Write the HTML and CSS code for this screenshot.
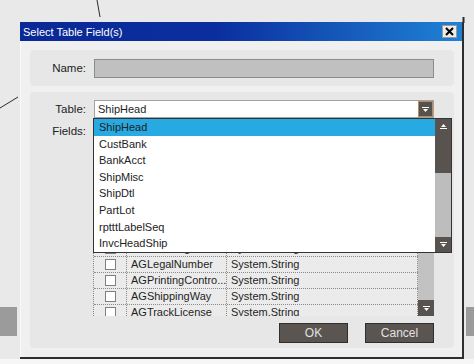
FILE: index.html
```html
<!DOCTYPE html>
<html lang="en">
<head>
  <meta charset="UTF-8">
  <title>Select Table Field(s)</title>
  <link rel="stylesheet" href="styles.css">
</head>
<body>
  <div class="desk">
    <!-- bits of the designer canvas behind the dialog -->
    <svg class="wires" width="474" height="364" viewBox="0 0 474 364">
      <path d="M97 0 L100 17" />
      <path d="M0 108 L18 97" />
      <path d="M463.5 17 L463.5 23" class="edge" />
    </svg>
    <div class="side-tab left"></div>
    <div class="side-tab right"></div>
    <div class="floor"></div>

    <div class="dialog">
      <div class="titlebar">
        <span>Select Table Field(s)</span>
        <button class="close">
          <svg width="9" height="9" viewBox="0 0 9 9"><path d="M1 1 L8 8 M8 1 L1 8" /></svg>
        </button>
      </div>

      <div class="dialog-body">
        <div class="panel name-panel">
          <label>Name:</label>
          <div class="name-input"></div>
        </div>

        <div class="panel main-panel">
          <div class="table-row">
            <label>Table:</label>
            <div class="combo">
              ShipHead
              <span class="combo-btn">
                <svg width="7" height="5" viewBox="0 0 7 5"><path d="M0 0 H7 V1 H0 Z M1 2 H6 L3.5 5 Z" /></svg>
              </span>

              <!-- open dropdown -->
              <div class="dropdown">
                <ul class="items">
                  <li class="selected">ShipHead</li>
                  <li>CustBank</li>
                  <li>BankAcct</li>
                  <li>ShipMisc</li>
                  <li>ShipDtl</li>
                  <li>PartLot</li>
                  <li>rptttLabelSeq</li>
                  <li>InvcHeadShip</li>
                </ul>
                <div class="list-scroll">
                  <div class="thumb">
                    <svg width="7" height="5" viewBox="0 0 7 5"><path d="M3.5 0 L6 3 H1 Z M0 4 H7 V5 H0 Z" /></svg>
                  </div>
                  <div class="track"></div>
                  <div class="scroll-btn">
                    <svg width="7" height="5" viewBox="0 0 7 5"><path d="M0 0 H7 V1 H0 Z M1 2 H6 L3.5 5 Z" /></svg>
                  </div>
                </div>
              </div>
            </div>
          </div>

          <div class="fields-row">
            <label>Fields:</label>
            <div class="grid">
              <div class="grid-body">
                <div class="grid-head"></div>
                <!-- rows under the open list -->
                <div class="grid-row"><span class="chk"><i></i></span><span></span><span></span></div>
                <div class="grid-row"><span class="chk"><i></i></span><span></span><span></span></div>
                <div class="grid-row"><span class="chk"><i></i></span><span></span><span></span></div>
                <div class="grid-row"><span class="chk"><i></i></span><span></span><span></span></div>
                <div class="grid-row"><span class="chk"><i></i></span><span></span><span></span></div>
                <div class="grid-row"><span class="chk"><i></i></span><span></span><span></span></div>
                <div class="grid-row"><span class="chk"><i></i></span><span>AGInvoicing</span><span>System.String</span></div>
                <div class="grid-row"><span class="chk"><i></i></span><span>AGLegalNumber</span><span>System.String</span></div>
                <div class="grid-row"><span class="chk"><i></i></span><span>AGPrintingContro...</span><span>System.String</span></div>
                <div class="grid-row"><span class="chk"><i></i></span><span>AGShippingWay</span><span>System.String</span></div>
                <div class="grid-row"><span class="chk"><i></i></span><span>AGTrackLicense</span><span>System.String</span></div>
              </div>
              <div class="grid-scroll">
                <div class="scroll-btn">
                  <svg width="7" height="5" viewBox="0 0 7 5"><path d="M0 0 H7 V1 H0 Z M1 2 H6 L3.5 5 Z" /></svg>
                </div>
              </div>
            </div>
          </div>

          <div class="actions">
            <button class="btn">OK</button>
            <button class="btn">Cancel</button>
          </div>
        </div>
      </div>
    </div>
  </div>
</body>
</html>
```

FILE: styles.css
```css
* {
  box-sizing: border-box;
}

body {
  margin: 0;
  font-family: "Liberation Sans", Arial, sans-serif;
  font-size: 11px;
  color: #1e1e1e;
}

.desk {
  position: relative;
  width: 474px;
  height: 364px;
  overflow: hidden;
  background: #e9e9e9;
  padding: 22px 0 0 20px;
}

.wires {
  position: absolute;
  left: 0;
  top: 0;
}

.wires path {
  stroke: #2b2b2b;
  stroke-width: 1;
  fill: none;
}

.wires .edge {
  stroke-width: 2;
}

.side-tab {
  position: absolute;
  top: 307px;
  height: 29px;
  background: #9b9b9b;
}

.side-tab.left {
  left: 0;
  width: 17px;
}

.side-tab.right {
  right: 0;
  width: 8px;
}

.floor {
  position: absolute;
  left: 0;
  right: 0;
  bottom: 0;
  height: 5px;
  background: #f6f6f6;
}

/* dialog */

.dialog {
  position: relative;
  width: 444px;
  border-right: 2px solid #2e2e2e;
  border-bottom: 2px solid #2e2e2e;
  background: #f0f0f0;
}

.titlebar {
  display: flex;
  justify-content: space-between;
  align-items: center;
  height: 19px;
  padding: 0 5px 0 3px;
  background: linear-gradient(90deg, #0a2896 0%, #0b2f9f 45%, #1f82d5 100%);
  color: #fff;
  font-size: 11px;
}

.close {
  width: 15px;
  height: 13px;
  padding: 0;
  display: flex;
  align-items: center;
  justify-content: center;
  background: #ececec;
  border: 1px solid #9c9c9c;
}

.close path {
  stroke: #000;
  stroke-width: 2;
}

.dialog-body {
  height: 316px;
  padding: 9px 8px 9px 10px;
  border-left: 1px solid #fafafa;
}

.panel {
  background: #e7e7e7;
  border-radius: 4px;
}

label {
  width: 56px;
  margin-right: 8px;
  text-align: right;
  font-size: 11.5px;
  color: #222;
}

.name-panel {
  display: flex;
  align-items: center;
  height: 36px;
  padding-right: 20px;
  margin-left: -1px;
}

.name-input {
  flex: 1;
  height: 19px;
  background: #c0c0c0;
  border: 1px solid #8c8c8c;
}

.main-panel {
  height: 256px;
  margin-top: 6px;
  margin-left: -1px;
  padding: 8px 20px 5px 0;
}

.table-row {
  display: flex;
  align-items: center;
  height: 18px;
}

.combo {
  position: relative;
  flex: 1;
  height: 18px;
  background: #fff;
  border: 1px solid #a2a2a2;
  padding-left: 3px;
  line-height: 16px;
  font-size: 11px;
}

.combo-btn {
  position: absolute;
  right: 0;
  top: 0;
  width: 15px;
  height: 16px;
  display: flex;
  align-items: center;
  justify-content: center;
  background: #58524c;
  border: 1px solid #b98c5c;
}

svg path {
  fill: #fff;
}

.dropdown {
  position: absolute;
  top: 17px;
  left: -2px;
  width: 359px;
  height: 135px;
  display: flex;
  background: #fff;
  border: 1px solid #343434;
  z-index: 2;
}

.items {
  flex: 1;
  list-style: none;
  margin: 0;
  padding: 0;
}

.items li {
  height: 16.6px;
  line-height: 16.6px;
  padding-left: 5px;
  font-size: 11px;
  color: #222;
}

.items li.selected {
  background: #27a9e1;
}

.list-scroll {
  width: 16px;
  display: flex;
  flex-direction: column;
}

.thumb {
  height: 54px;
  background: #58534e;
  display: flex;
  justify-content: center;
  padding-top: 5px;
}

.track {
  flex: 1;
  background: #bdbdbd;
}

.scroll-btn {
  height: 15px;
  background: #58534e;
  display: flex;
  align-items: center;
  justify-content: center;
}

/* fields grid */

.fields-row {
  display: flex;
  margin-top: 6px;
}

.fields-row label {
  line-height: 12px;
  padding-top: 1px;
}

.grid {
  display: flex;
  width: 341px;
  height: 192px;
  margin-left: -1px;
  overflow: hidden;
}

.grid-body {
  flex: 1;
  border-left: 1px dotted #8a8a8a;
}

.grid-head {
  height: 21px;
  border-bottom: 1px dotted #8a8a8a;
}

.grid-row {
  display: grid;
  grid-template-columns: 33px 100px 1fr;
  height: 16px;
  background: #ebebeb;
  border-bottom: 1px dotted #8a8a8a;
  font-size: 11px;
  line-height: 15px;
}

.grid-row span {
  padding-left: 4px;
  border-right: 1px dotted #8a8a8a;
  white-space: nowrap;
  overflow: hidden;
}

.grid-row .chk {
  display: flex;
  align-items: center;
  justify-content: center;
  padding: 0;
}

.chk i {
  width: 11px;
  height: 11px;
  background: #fff;
  border: 1px solid #7e7e7e;
}

.grid-scroll {
  width: 16px;
  background: #c2c2c2;
  display: flex;
  flex-direction: column;
  justify-content: flex-end;
}

.grid-scroll .scroll-btn {
  height: 16px;
}

/* buttons */

.actions {
  display: flex;
  justify-content: flex-end;
  gap: 17px;
  margin-top: 7px;
}

.btn {
  width: 69px;
  height: 20px;
  padding: 0;
  background: #5a5550;
  border: 1px solid #2f2f2f;
  color: #e2e2e2;
  font-family: "Liberation Sans", Arial, sans-serif;
  font-size: 12px;
}
```
